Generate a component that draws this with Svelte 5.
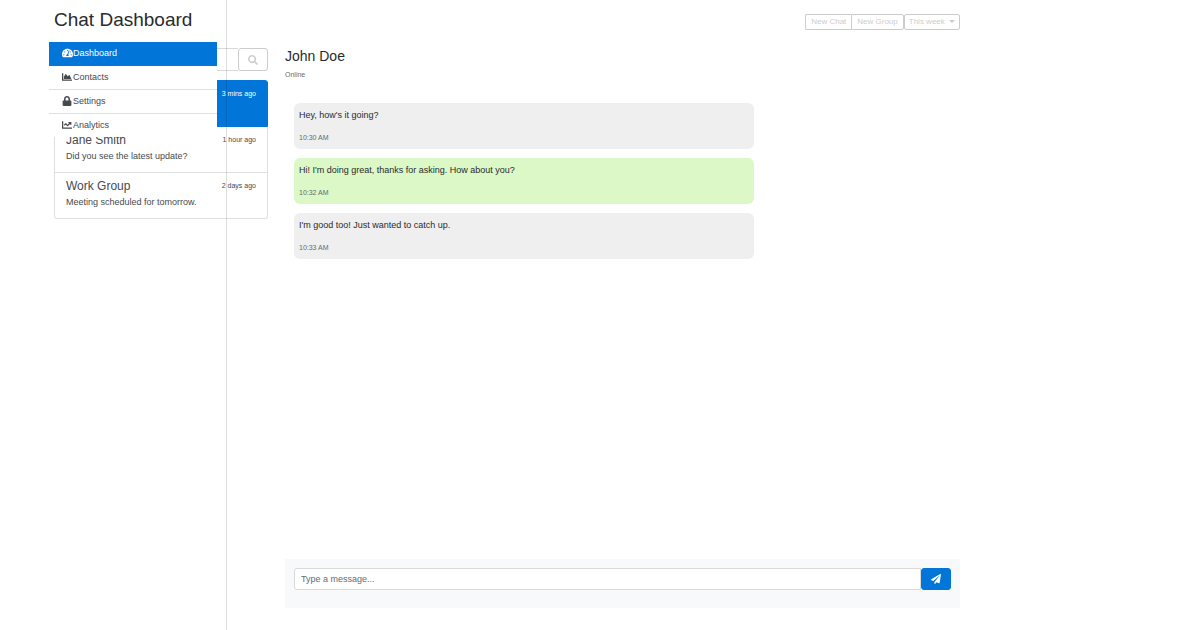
<script>
  const nav = [
    {
      label: 'Dashboard',
      box: '0 0 576 512',
      wide: true,
      path: 'M288 32C128.94 32 0 160.94 0 320c0 52.8 14.25 102.26 39.06 144.8 5.61 9.62 16.3 15.2 27.44 15.2h443c11.14 0 21.83-5.58 27.44-15.2C561.75 422.26 576 372.8 576 320c0-159.06-128.94-288-288-288zm0 64c14.71 0 26.58 10.13 30.32 23.65-1.11 2.26-2.64 4.23-3.45 6.67l-9.22 27.67c-5.13 3.49-10.97 6.01-17.64 6.01-17.67 0-32-14.33-32-32S270.33 96 288 96zM96 384c-17.67 0-32-14.33-32-32s14.33-32 32-32 32 14.33 32 32-14.33 32-32 32zm48-160c-17.67 0-32-14.33-32-32s14.33-32 32-32 32 14.33 32 32-14.33 32-32 32zm246.77-72.41l-61.33 184C343.13 347.33 352 364.54 352 384c0 11.72-3.38 22.55-8.88 32H232.88c-5.5-9.45-8.88-20.28-8.88-32 0-33.94 26.5-61.43 59.9-63.59l61.34-184.01c4.17-12.56 17.73-19.45 30.36-15.17 12.57 4.19 19.35 17.79 15.17 30.36zm14.66 57.2l15.52-46.55c3.47-1.29 7.13-2.23 11.05-2.23 17.67 0 32 14.33 32 32s-14.33 32-32 32c-11.38-.01-20.89-6.28-26.57-15.22zM480 384c-17.67 0-32-14.33-32-32s14.33-32 32-32 32 14.33 32 32-14.33 32-32 32z'
    },
    {
      label: 'Contacts',
      box: '0 0 512 512',
      path: 'M500 384c6.6 0 12 5.4 12 12v40c0 6.6-5.4 12-12 12H12c-6.6 0-12-5.4-12-12V76c0-6.6 5.4-12 12-12h40c6.6 0 12 5.4 12 12v308h436zM372.7 159.5L288 216l-85.3-113.7c-5.1-6.8-15.5-6.3-19.9 1L96 248v104h384l-89.9-187.8c-3.2-6.5-11.4-8.7-17.4-4.7z'
    },
    {
      label: 'Settings',
      box: '-32 0 512 512',
      path: 'M400 224h-24v-72C376 68.2 307.8 0 224 0S72 68.2 72 152v72H48c-26.5 0-48 21.5-48 48v192c0 26.5 21.5 48 48 48h352c26.5 0 48-21.5 48-48V272c0-26.5-21.5-48-48-48zm-104 0H152v-72c0-39.7 32.3-72 72-72s72 32.3 72 72v72z'
    },
    {
      label: 'Analytics',
      box: '0 0 512 512',
      path: 'M496 384H64V80c0-8.84-7.16-16-16-16H16C7.16 64 0 71.16 0 80v336c0 17.67 14.33 32 32 32h464c8.84 0 16-7.16 16-16v-32c0-8.84-7.16-16-16-16zM464 96H345.94c-21.38 0-32.09 25.85-16.97 40.97l32.4 32.4L288 242.75l-73.37-73.37c-12.5-12.5-32.76-12.5-45.25 0l-68.69 68.69c-6.25 6.25-6.25 16.38 0 22.63l22.62 22.62c6.25 6.25 16.38 6.25 22.63 0L192 237.25l73.37 73.37c12.5 12.5 32.76 12.5 45.25 0l96-96 32.4 32.4c15.12 15.12 40.97 4.41 40.97-16.97V112c.01-8.84-7.15-16-15.99-16z'
    }
  ];

  const chats = [
    { name: 'John Doe', when: '3 mins ago', preview: "Hey, how's it going?" },
    { name: 'Jane Smith', when: '1 hour ago', preview: 'Did you see the latest update?' },
    { name: 'Work Group', when: '2 days ago', preview: 'Meeting scheduled for tomorrow.' }
  ];

  const messages = [
    { text: "Hey, how's it going?", time: '10:30 AM' },
    { text: "Hi! I'm doing great, thanks for asking. How about you?", time: '10:32 AM', mine: true },
    { text: "I'm good too! Just wanted to catch up.", time: '10:33 AM' }
  ];

  let activeNav = $state('Dashboard');
  let activeChat = $state('John Doe');
</script>

<aside class="sidebar">
  <nav>
    {#each nav as item}
      <a href="#{item.label.toLowerCase()}" class:active={activeNav === item.label} onclick={() => (activeNav = item.label)}>
        <span class="icon-slot">
          <svg class="icon" class:wide={item.wide} viewBox={item.box} aria-hidden="true"><path d={item.path} /></svg>
        </span>{item.label}
      </a>
    {/each}
  </nav>
</aside>

<main>
  <header>
    <h1>Chat Dashboard</h1>
    <div class="toolbar">
      <div class="group">
        <button type="button">New Chat</button>
        <button type="button">New Group</button>
      </div>
      <button type="button" class="dropdown">This week <span class="caret"></span></button>
    </div>
  </header>

  <div class="columns">
    <section class="list-column">
      <form class="search" onsubmit={(e) => e.preventDefault()}>
        <input type="search" aria-label="Search chats" />
        <button type="submit" aria-label="Search">
          <svg class="icon" viewBox="0 0 512 512" aria-hidden="true"><path d="M505 442.7L405.3 343c-4.5-4.5-10.6-7-17-7H372c27.6-35.3 44-79.7 44-128C416 93.1 322.9 0 208 0S0 93.1 0 208s93.1 208 208 208c48.3 0 92.7-16.4 128-44v16.3c0 6.4 2.5 12.5 7 17l99.7 99.7c9.4 9.4 24.6 9.4 33.9 0l28.3-28.3c9.4-9.4 9.4-24.6.1-34zM208 336c-70.7 0-128-57.2-128-128 0-70.7 57.2-128 128-128 70.7 0 128 57.2 128 128 0 70.7-57.2 128-128 128z" /></svg>
        </button>
      </form>
      <div class="chats">
        {#each chats as chat}
          <a href="#chat" class:active={activeChat === chat.name} onclick={() => (activeChat = chat.name)}>
            <div class="chat-head">
              <h2>{chat.name}</h2>
              <small>{chat.when}</small>
            </div>
            <p>{chat.preview}</p>
          </a>
        {/each}
      </div>
    </section>

    <section class="conversation">
      <h3>John Doe</h3>
      <small class="status">Online</small>
      <div class="messages">
        {#each messages as message}
          <div class="message" class:mine={message.mine}>
            <p>{message.text}</p>
            <small>{message.time}</small>
          </div>
        {/each}
      </div>
      <form class="composer" onsubmit={(e) => e.preventDefault()}>
        <input type="text" placeholder="Type a message..." aria-label="Message" />
        <button type="submit" aria-label="Send">
          <svg class="icon" viewBox="0 0 512 512" aria-hidden="true"><path d="M476 3.2L12.5 270.6c-18.1 10.4-15.8 35.6 2.2 43.2L121 358.4l287.3-253.2c5.5-4.9 13.3 2.6 8.6 8.3L176 407v80.5c0 23.6 28.5 32.9 42.5 15.8L282 426l124.6 52.2c14.2 6 30.4-2.9 33-18.2l72-432C515 7.8 493.3-6.8 476 3.2z" /></svg>
        </button>
      </form>
    </section>
  </div>
</main>

<style>
  :global(body) {
    margin: 0;
    background: #fff;
    color: #292b2c;
    font-family: "Liberation Sans", Arial, sans-serif;
    font-size: 9px;
    line-height: 14px;
  }
  :global(*) { box-sizing: border-box; }

  h1, h2, h3, p { margin: 0; font-weight: 400; }
  a { color: #464a4c; text-decoration: none; }
  small { font-size: 7px; }
  button, input { font: inherit; margin: 0; }
  button { cursor: pointer; }
  input { min-width: 0; flex: 1; outline: none; background: #fff; border: 1px solid #d9d9d9; border-radius: 3px 0 0 3px; padding: 0 6px; color: #464a4c; }
  input::placeholder { color: #636c72; opacity: 1; }
  .icon { display: block; flex: none; width: 10px; height: 10px; fill: currentColor; }
  .icon.wide { width: 11px; }

  .sidebar {
    position: fixed;
    inset: 0 auto 0 0;
    z-index: 2;
    padding: 42px 9px 0 49px;
    border-right: 1px solid rgba(0, 0, 0, 0.13);
  }
  .sidebar nav { width: 168px; background: #fff; }
  .sidebar a { display: flex; align-items: center; height: 24px; padding: 0 12px 1px; border-bottom: 1px solid #dfdfdf; }
  .sidebar a:last-child { height: 23px; border-bottom: 0; }
  .sidebar a.active { background: #0275d8; border-color: #0275d8; color: #fff; }
  .icon-slot { display: flex; justify-content: center; width: 12px; }

  main { display: flex; flex-direction: column; min-height: 100vh; padding: 9px 20% 22px 54px; }
  header { display: flex; justify-content: space-between; align-items: flex-start; height: 39px; }
  h1 { font-size: 19px; line-height: 21px; }
  .toolbar { display: flex; padding-top: 5px; }
  .group { display: flex; }
  .toolbar button { height: 16px; padding: 0 4px; font-size: 8px; line-height: 12px; color: #ccc; background: #fff; border: 1px solid #ccc; border-radius: 2px; }
  .toolbar .group button { padding: 0 5px; }
  .group button:first-child { border-radius: 2px 0 0 2px; border-right: 0; }
  .group button:last-child { border-radius: 0 2px 2px 0; }
  .caret { display: inline-block; margin-left: 2px; vertical-align: 1px; border: 3px solid transparent; border-top-color: currentColor; border-bottom: 0; }

  .columns { display: grid; grid-template-columns: 214px 1fr; gap: 17px; flex: 1; }
  .search { display: flex; height: 23px; margin-bottom: 9px; }
  .search button, .composer button { display: flex; align-items: center; justify-content: center; width: 30px; padding: 0; border-radius: 3px; }
  .search button { color: #ccc; background: #fff; border: 1px solid #ccc; }
  .search input { border-right: 0; }

  .chats { display: flex; flex-direction: column; }
  .chats a { padding: 6px 11px 9px; border: 1px solid #dfdfdf; border-top: 0; }
  .chats a:first-child { border-top: 1px solid #dfdfdf; border-radius: 3px 3px 0 0; }
  .chats a:last-child { border-radius: 0 0 3px 3px; }
  .chats a.active { background: #0275d8; color: #fff; border-color: #0275d8; }
  .chat-head { display: flex; justify-content: space-between; margin-bottom: 2px; }
  h2 { font-size: 12px; line-height: 14px; }

  .conversation { display: flex; flex-direction: column; }
  h3 { font-size: 14px; line-height: 16px; margin-bottom: 4px; }
  .status, .message small { color: #636c72; }
  .messages { display: flex; flex-direction: column; gap: 9px; flex: 1; padding: 21px 9px 9px; }
  .message { width: 70%; padding: 5px 5px 4px; border-radius: 6px; background: #efefef; }
  .message.mine { background: #dbf8c6; }
  .message p { margin-bottom: 9px; }
  .message small { display: block; }
  .composer { display: flex; height: 49px; padding: 9px 9px 18px; background: #f7f9fb; }
  .composer button { color: #fff; background: #0275d8; border: 1px solid #0275d8; }
</style>
